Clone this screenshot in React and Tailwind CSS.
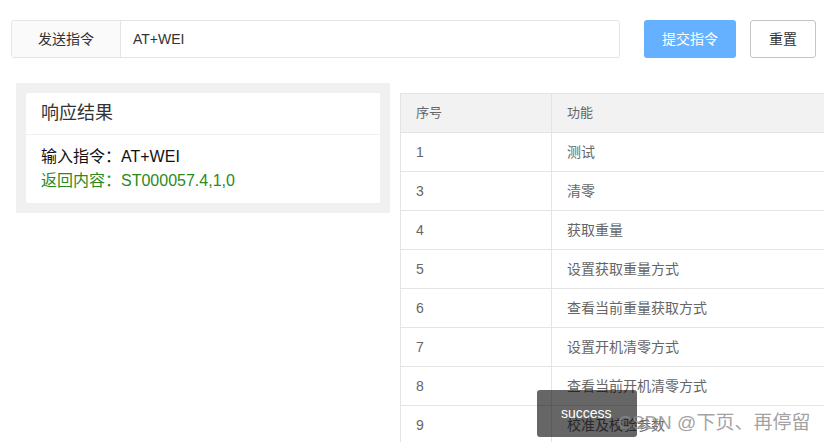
const ROWS = [
  ['1', '测试'],
  ['3', '清零'],
  ['4', '获取重量'],
  ['5', '设置获取重量方式'],
  ['6', '查看当前重量获取方式'],
  ['7', '设置开机清零方式'],
  ['8', '查看当前开机清零方式'],
  ['9', '校准及校验参数'],
]

const FONT = { fontFamily: '"Liberation Sans", "Noto Sans CJK SC", sans-serif' }

export default function App() {
  return (
    <div className="relative w-[824px] h-[442px] overflow-hidden bg-white" style={FONT}>
      {/* command bar */}
      <div className="flex items-center pt-5 pl-[11px]">
        <div className="flex h-[38px] w-[609px] border border-[#e4e4e4] rounded-[3px] overflow-hidden">
          <div className="w-[109px] shrink-0 bg-[#fafafa] border-r border-[#e4e4e4] flex items-center justify-center text-[14px] text-[#333]">
            发送指令
          </div>
          <div className="flex-1 flex items-center pl-[12px] text-[14px] text-[#333]">AT+WEI</div>
        </div>
        <button className="ml-6 h-[38px] w-[92px] rounded-[3px] bg-[#66b1ff] text-white text-[14px]">
          提交指令
        </button>
        <button className="ml-[14px] h-[38px] w-[66px] rounded-[3px] border border-[#c4c4c4] bg-white text-[#333] text-[14px]">
          重置
        </button>
      </div>

      <div className="flex items-start mt-[25px]">
        {/* response panel */}
        <div className="ml-4 w-[374px] shrink-0 bg-[#f0f0f0] p-[10px]">
          <div className="bg-white rounded-[2px]">
            <div className="h-[42px] border-b border-[#f0f0f0] flex items-center pl-[15px] text-[18px] text-[#333]">
              响应结果
            </div>
            <div className="px-[15px] pt-[10px] pb-[10px] text-[16px] leading-[24px]">
              <div className="text-[#111]">输入指令：AT+WEI</div>
              <div className="text-[#2a8a1e]">返回内容：ST000057.4,1,0</div>
            </div>
          </div>
        </div>

        {/* function table */}
        <div className="ml-[10px] mt-[10px] w-[440px] shrink-0">
          <table className="w-full border-collapse text-[14px] text-[#666]">
            <thead>
              <tr className="bg-[#f2f2f2] h-[39px]">
                <th className="w-[151px] border border-[#e4e4e4] text-left font-normal pl-[15px] text-[13px]">序号</th>
                <th className="border border-[#e4e4e4] text-left font-normal pl-[15px] text-[13px]">功能</th>
              </tr>
            </thead>
            <tbody>
              {ROWS.map(([n, label]) => (
                <tr key={n} className="h-[39px]">
                  <td className="border border-[#e4e4e4] pl-[15px]">{n}</td>
                  <td className="border border-[#e4e4e4] pl-[15px]">{label}</td>
                </tr>
              ))}
            </tbody>
          </table>
        </div>
      </div>

      {/* toast */}
      <div className="absolute left-[537px] top-[390px] w-[100px] h-[47px] rounded-[3px] bg-black/60 text-white text-[14px] flex items-center pl-[24px]">
        success
      </div>

      {/* watermark */}
      <div className="absolute left-[618px] top-[409px] text-[19px] text-[#8a8a8a]/80 whitespace-nowrap">
        CSDN @下页、再停留
      </div>
    </div>
  )
}
